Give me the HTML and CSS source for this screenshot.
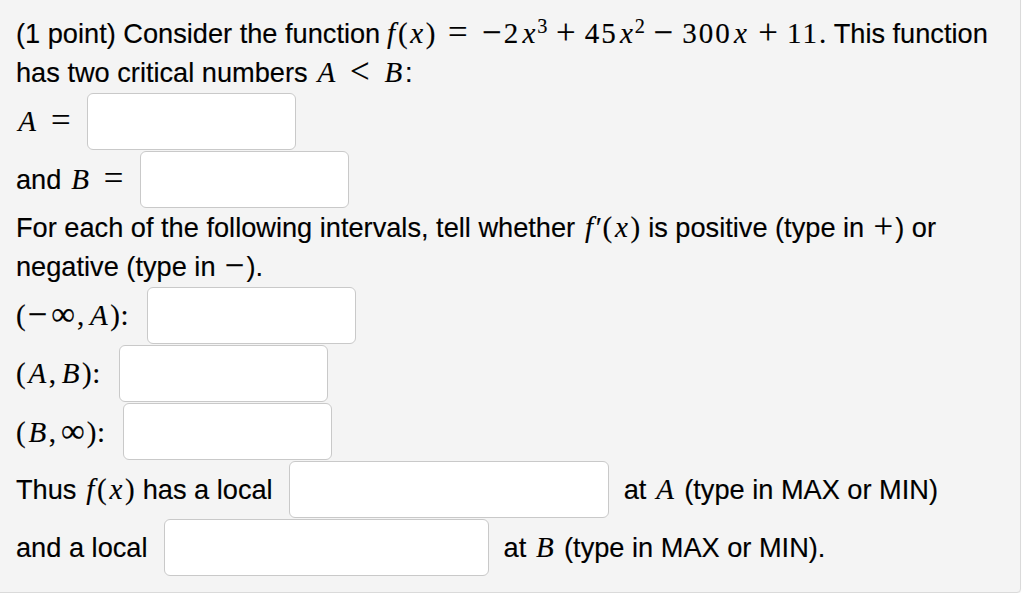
FILE: index.html
```html
<!DOCTYPE html>
<html>
<head>
<meta charset="utf-8">
<link rel="stylesheet" href="styles.css">
</head>
<body>
<div class="problem">
  <p class="line">(1 point) Consider the function <span class="math lead"><i>f</i>(<i>x</i>)<span class="op rel">=</span><span class="op">−</span><span class="num">2</span><i>x</i><sup>3</sup><span class="op bin">+</span><span class="num">45</span><i>x</i><sup>2</sup><span class="op bin">−</span><span class="num">300</span><i>x</i><span class="op bin">+</span><span class="num">11</span>.</span> This function has two critical numbers <span class="math"><i>A</i><span class="op rel">&lt;</span><i>B</i></span>:</p>
  <div class="row">
    <span class="math"><i>A</i><span class="op rel end">=</span></span>
    <span class="field small"></span>
  </div>
  <div class="row">
    <span>and <span class="math"><i>B</i><span class="op rel end">=</span></span></span>
    <span class="field small"></span>
  </div>
  <p class="line">For each of the following intervals, tell whether <span class="math"><i>f</i>′(<i>x</i>)</span> is positive (type in <span class="math"><span class="op">+</span></span>) or negative (type in <span class="math"><span class="op">−</span></span>).</p>
  <div class="row">
    <span class="math">(<span class="op">−</span><span class="inf">∞</span>,<span class="thin"></span><i>A</i>):</span>
    <span class="field small"></span>
  </div>
  <div class="row">
    <span class="math">(<i>A</i>,<span class="thin"></span><i>B</i>):</span>
    <span class="field small"></span>
  </div>
  <div class="row">
    <span class="math">(<i>B</i>,<span class="thin"></span><span class="inf">∞</span>):</span>
    <span class="field small"></span>
  </div>
  <div class="row tight">
    <span>Thus <span class="math"><i>f</i>(<i>x</i>)</span> has a local</span>
    <span class="field wide"></span>
    <span class="after">at <span class="math"><i>A</i></span> (type in MAX or MIN)</span>
  </div>
  <div class="row tight">
    <span>and a local</span>
    <span class="field wider"></span>
    <span class="after">at <span class="math"><i>B</i></span> (type in MAX or MIN).</span>
  </div>
</div>
</body>
</html>
```
FILE: styles.css
```css
html, body {
  margin: 0;
  background: #ffffff;
}
body {
  font-family: "Liberation Sans", Arial, Helvetica, sans-serif;
  font-size: 27.2px;
  color: #000;
  -webkit-text-stroke: 0.15px #000;
}
.problem {
  box-sizing: border-box;
  margin: -6px 0 0 -6px;
  width: 1027px;
  height: 599px;
  padding: 19px 16px 0 21px;
  background: #f4f4f4;
  border: 1px solid #dadada;
  border-radius: 4px;
  box-shadow: 0 1px 1px rgba(0, 0, 0, 0.05);
}
.line {
  margin: 0;
  line-height: 39px;
}
.math {
  font-family: "Liberation Serif", "Times New Roman", serif;
  font-size: 29px;
  line-height: 1;
  letter-spacing: 0.4px;
}
.math.lead {
  margin-left: -3px;
}
.math i {
  font-style: italic;
  padding: 0 0.08em;
}
.math .num {
  letter-spacing: 2px;
}
.math sup {
  font-size: 0.7em;
  line-height: 0;
  vertical-align: 0.5em;
  letter-spacing: 0;
  margin-left: -1px;
}
.op {
  display: inline-block;
  font-size: 1.2em;
  line-height: 1;
  padding: 0 0.05em;
  vertical-align: -1px;
}
.inf {
  display: inline-block;
  font-size: 1.15em;
  line-height: 1;
  padding: 0 0.05em;
}
.thin {
  display: inline-block;
  width: 0.1em;
}
.rel {
  margin: 0 0.3em;
}
.rel.end {
  margin-right: -4px;
}
.bin {
  margin: 0 0.2em;
}
.row {
  display: flex;
  align-items: center;
  height: 58px;
  line-height: 39px;
  gap: 18px;
}
.row.tight {
  gap: 16px;
}
.field {
  box-sizing: border-box;
  height: 57px;
  background: #fff;
  border: 1px solid #c9c9c9;
  border-radius: 6px;
}
.field.small { width: 209px; }
.field.wide { width: 320px; }
.field.wider { width: 325px; }
.after {
  margin-left: -1px;
}
```
